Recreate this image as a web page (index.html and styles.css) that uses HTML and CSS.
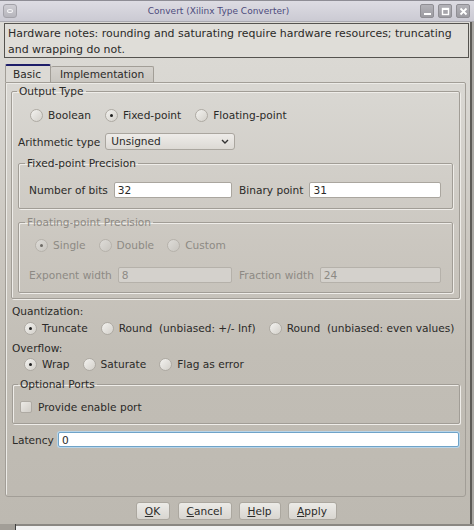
FILE: index.html
```html
<!DOCTYPE html>
<html>
<head>
<meta charset="utf-8">
<title>Convert (Xilinx Type Converter)</title>
<link rel="stylesheet" href="styles.css">
</head>
<body>
<div class="screen">
  <div class="titlebar">
    <div class="tb-menu"><span class="tb-menu-dot"></span></div>
    <div class="tb-title">Convert (Xilinx Type Converter)</div>
    <div class="tb-btns">
      <span class="tb-btn"><svg width="13" height="13" viewBox="0 0 13 13"><rect x="3" y="8" width="7" height="2" fill="#fff"/></svg></span>
      <span class="tb-btn"><svg width="13" height="13" viewBox="0 0 13 13"><rect x="3.5" y="3.5" width="6" height="6" fill="none" stroke="#fff" stroke-width="1.4"/><rect x="3" y="3" width="7" height="2" fill="#fff"/></svg></span>
      <span class="tb-btn"><svg width="13" height="13" viewBox="0 0 13 13"><path d="M3.5 3.5 L9.5 9.5 M9.5 3.5 L3.5 9.5" stroke="#fff" stroke-width="1.8"/></svg></span>
    </div>
  </div>

  <div class="dialog">
    <div class="notes">Hardware notes: rounding and saturating require hardware resources; truncating and wrapping do not.</div>

    <div class="tabs">
      <div class="tab active">Basic</div>
      <div class="tab">Implementation</div>
    </div>

    <div class="panel">
      <fieldset class="group g-output">
        <legend>Output Type</legend>
        <div class="radios r-output">
          <span class="radio"><span class="rb"></span>Boolean</span>
          <span class="radio"><span class="rb on"></span>Fixed-point</span>
          <span class="radio"><span class="rb"></span>Floating-point</span>
        </div>
        <div class="arith">
          <span>Arithmetic type</span>
          <div class="select">Unsigned<svg class="chev" width="8" height="5" viewBox="0 0 8 5"><path d="M1 1 L4 4 L7 1" fill="none" stroke="#333" stroke-width="1.4"/></svg></div>
        </div>

        <fieldset class="group g-inner g-fixed">
          <legend>Fixed-point Precision</legend>
          <div class="pair-row">
            <div class="pair"><span>Number of bits</span><div class="field">32</div></div>
            <div class="pair"><span>Binary point</span><div class="field">31</div></div>
          </div>
        </fieldset>

        <fieldset class="group g-inner g-float disabled">
          <legend>Floating-point Precision</legend>
          <div class="radios r-float">
            <span class="radio"><span class="rb on"></span>Single</span>
            <span class="radio"><span class="rb"></span>Double</span>
            <span class="radio"><span class="rb"></span>Custom</span>
          </div>
          <div class="pair-row pr-float">
            <div class="pair"><span>Exponent width</span><div class="field">8</div></div>
            <div class="pair"><span>Fraction width</span><div class="field">24</div></div>
          </div>
        </fieldset>
      </fieldset>

      <div class="label l-quant">Quantization:</div>
      <div class="radios r-quant">
        <span class="radio"><span class="rb on"></span>Truncate</span>
        <span class="radio"><span class="rb"></span>Round&nbsp; (unbiased: +/- Inf)</span>
        <span class="radio"><span class="rb"></span>Round&nbsp; (unbiased: even values)</span>
      </div>
      <div class="label l-over">Overflow:</div>
      <div class="radios r-over">
        <span class="radio"><span class="rb on"></span>Wrap</span>
        <span class="radio"><span class="rb"></span>Saturate</span>
        <span class="radio"><span class="rb"></span>Flag as error</span>
      </div>

      <fieldset class="group g-ports">
        <legend>Optional Ports</legend>
        <div class="check-row"><span class="cb"></span>Provide enable port</div>
      </fieldset>

      <div class="latency">
        <span>Latency</span>
        <div class="field focus">0</div>
      </div>
    </div>

    <div class="buttons">
      <div class="btn b-ok"><u>O</u>K</div>
      <div class="btn b-cancel"><u>C</u>ancel</div>
      <div class="btn b-help"><u>H</u>elp</div>
      <div class="btn b-apply"><u>A</u>pply</div>
    </div>
  </div>

  <div class="bottom-strip"><div class="bs-left"></div><div class="bs-right"></div></div>
</div>
</body>
</html>
```

FILE: styles.css
```css
* { box-sizing: border-box; }
html, body { margin: 0; padding: 0; }
body {
  width: 474px;
  height: 530px;
  overflow: hidden;
  background: #a9a7a3;
  font-family: "DejaVu Sans", "Noto Sans", sans-serif;
  font-size: 10.6px;
  line-height: 14px;
  color: #2b2a28;
}
.screen { width: 474px; height: 530px; display: flex; flex-direction: column; }

/* title bar */
.titlebar {
  height: 22px;
  flex: none;
  display: flex;
  align-items: center;
  padding: 0 4px 0 3px;
  background: linear-gradient(#dddce3, #cbcad3);
  border-top: 1px solid #8e8d95;
  border-bottom: 1px solid #aaa9b0;
}
.tb-menu {
  width: 14px; height: 14px;
  border-radius: 3px;
  background: linear-gradient(#cfced4, #b6b5bc);
  border: 1px solid #a3a2a9;
  display: grid; place-items: center;
}
.tb-menu-dot { width: 6px; height: 4px; border-radius: 50%; border: 1px solid #f4f4f6; }
.tb-title {
  flex: 1;
  text-align: center;
  font-size: 9px;
  color: #4d4b7c;
}
.tb-btns { display: flex; gap: 4px; }
.tb-btn {
  width: 14px; height: 14px;
  border-radius: 2px;
  background: linear-gradient(#b3b2b8, #9c9ba1);
  border: 1px solid #8f8e94;
  display: grid; place-items: center;
}
.tb-btn svg { display: block; }

/* dialog */
.dialog {
  width: 472px;
  height: 502px;
  flex: none;
  padding-top: 1px;
  border-right: 2px solid #5d5b57;
  background: linear-gradient(#dddbd6 0, #d8d6d1 80px, #cbc7c0 220px, #c2beb6 330px, #bdb9b1 100%);
  display: flex;
  flex-direction: column;
}
.notes {
  margin: 0 1px 0 4px;
  height: 35px;
  border: 1px solid #55534f;
  background: #dfddd8;
  padding: 2px 12px 0 3px;
  line-height: 16px;
  font-size: 10.95px;
}

.tabs { display: flex; align-items: flex-end; margin: 6px 0 0 5px; height: 18px; }
.tab {
  height: 16px;
  padding: 0 9px;
  border: 1px solid #a29e97;
  border-bottom: none;
  border-left: none;
  background: linear-gradient(#d5d2cd, #c9c6c0);
  line-height: 15px;
  border-radius: 2px 2px 0 0;
}
.tab.active {
  height: 18px;
  padding: 0 7px 0 7px;
  width: 46px;
  border-left: 1px solid #a29e97;
  border-top: 2px solid #1e1e6a;
  background: #dcdad5;
  line-height: 16px;
}

.panel {
  margin-left: 5px;
  width: 461px;
  height: 415px;
  border: 1px solid #a29e97;
  border-radius: 0 2px 3px 3px;
  padding: 1px 5px 0 6px;
  box-shadow: inset 1px 1px 0 #ecebe7;
}

/* group boxes */
fieldset.group {
  margin: 0;
  padding: 0;
  min-inline-size: 0;
  border: 1px solid #a19d96;
  border-radius: 2px;
  box-shadow: inset 1px 1px 0 #efede9, 1px 1px 0 #efede9;
}
fieldset.group > legend { padding: 0 2px; line-height: 14px; }

.g-output { margin-left: -1px !important; padding: 0 6px 5px 6px !important; }
.g-output > legend { margin-left: -1px; }

.g-inner { margin-top: 6px !important; padding: 0 11px 0 10px !important; }
.g-inner > legend { margin-left: -4px; }
.g-fixed { padding-bottom: 10px !important; }
.g-float { padding-bottom: 9px !important; }

.g-ports { margin-top: 5px !important; padding: 0 7px 8px 7px !important; }
.g-ports > legend { margin-left: -2px; }

.disabled { color: #8d8a84; }

/* radios */
.radios { display: flex; align-items: center; height: 16px; gap: 13px; }
.radio { display: flex; align-items: center; gap: 5px; white-space: nowrap; }
.rb {
  width: 13px; height: 13px;
  border-radius: 50%;
  border: 1px solid #aeaaa3;
  background: linear-gradient(135deg, #f3f2ef, #d3d0ca);
  display: grid; place-items: center;
  flex: none;
}
.rb.on::after { content: ""; width: 3px; height: 3px; border-radius: 50%; background: #1e1e1e; }
.disabled .rb { border-color: #b6b2ab; background: linear-gradient(135deg, #dedcd8, #c8c5bf); }
.disabled .rb.on::after { background: #6e6b66; }

.r-output { margin: 9px 0 0 12px; gap: 14px; }
.r-float { margin: 8px 0 0 6px; }
.r-quant { margin: 2px 0 0 12px; }
.r-over { margin: 1px 0 0 12px; }

.label { height: 14px; }
.l-quant { margin-top: 5px; }
.l-over { margin-top: 5px; }

/* arithmetic select */
.arith { display: flex; align-items: center; gap: 5px; margin-top: 10px; height: 17px; }
.select {
  width: 130px; height: 17px;
  border: 1px solid #aaa69f;
  border-radius: 3px;
  background: linear-gradient(#eeece9, #dcd9d4);
  padding: 0 5px;
  display: flex; align-items: center; justify-content: space-between;
  line-height: 15px;
}

/* input fields */
.pair-row { display: flex; gap: 7px; margin-top: 12px; height: 16px; }
.pr-float { margin-top: 14px; }
.pair { flex: 1; display: flex; align-items: center; gap: 6px; white-space: nowrap; }
.pair-row .pair:first-child { flex: 0 0 203px; }
.field {
  flex: 1;
  height: 16px;
  background: #fff;
  border: 1px solid #aaa69f;
  border-radius: 2px;
  padding-left: 3px;
  line-height: 14px;
  color: #2b2a28;
}
.disabled .field { background: #d4d1cc; border-color: #b5b1aa; color: #8d8a84; }

.check-row { display: flex; align-items: center; gap: 6px; margin-top: 8px; height: 16px; }
.cb {
  width: 12px; height: 12px;
  border: 1px solid #aeaaa3;
  border-radius: 2px;
  background: linear-gradient(135deg, #eceae6, #d0cdc7);
}

.latency { display: flex; align-items: center; gap: 4px; margin-top: 8px; height: 15px; }
.field.focus {
  height: 15px;
  border-color: #6fa3c8;
  box-shadow: 0 0 0 1px #b9d5e8;
  margin-right: 1px;
}

/* buttons */
.buttons { display: flex; justify-content: center; gap: 7px; margin-top: 5px; height: 18px; padding-left: 2px; }
.btn {
  height: 18px;
  border: 1px solid #aba79f;
  border-radius: 3px;
  background: linear-gradient(#ecebe7, #d8d5d0);
  text-align: center;
  line-height: 16px;
}
.btn u { text-underline-offset: 1px; }
.b-ok { width: 34px; }
.b-cancel { width: 54px; margin-left: 1px; }
.b-help { width: 42px; }
.b-apply { width: 49px; }

/* bottom strip */
.bottom-strip { flex: 1; display: flex; }
.bs-left { width: 16px; background: #a29e97; border-right: 1px solid #3e3e3e; }
.bs-right { flex: 1; border-top: 2px solid #8a8782; background: #f2f2f2; }
```
